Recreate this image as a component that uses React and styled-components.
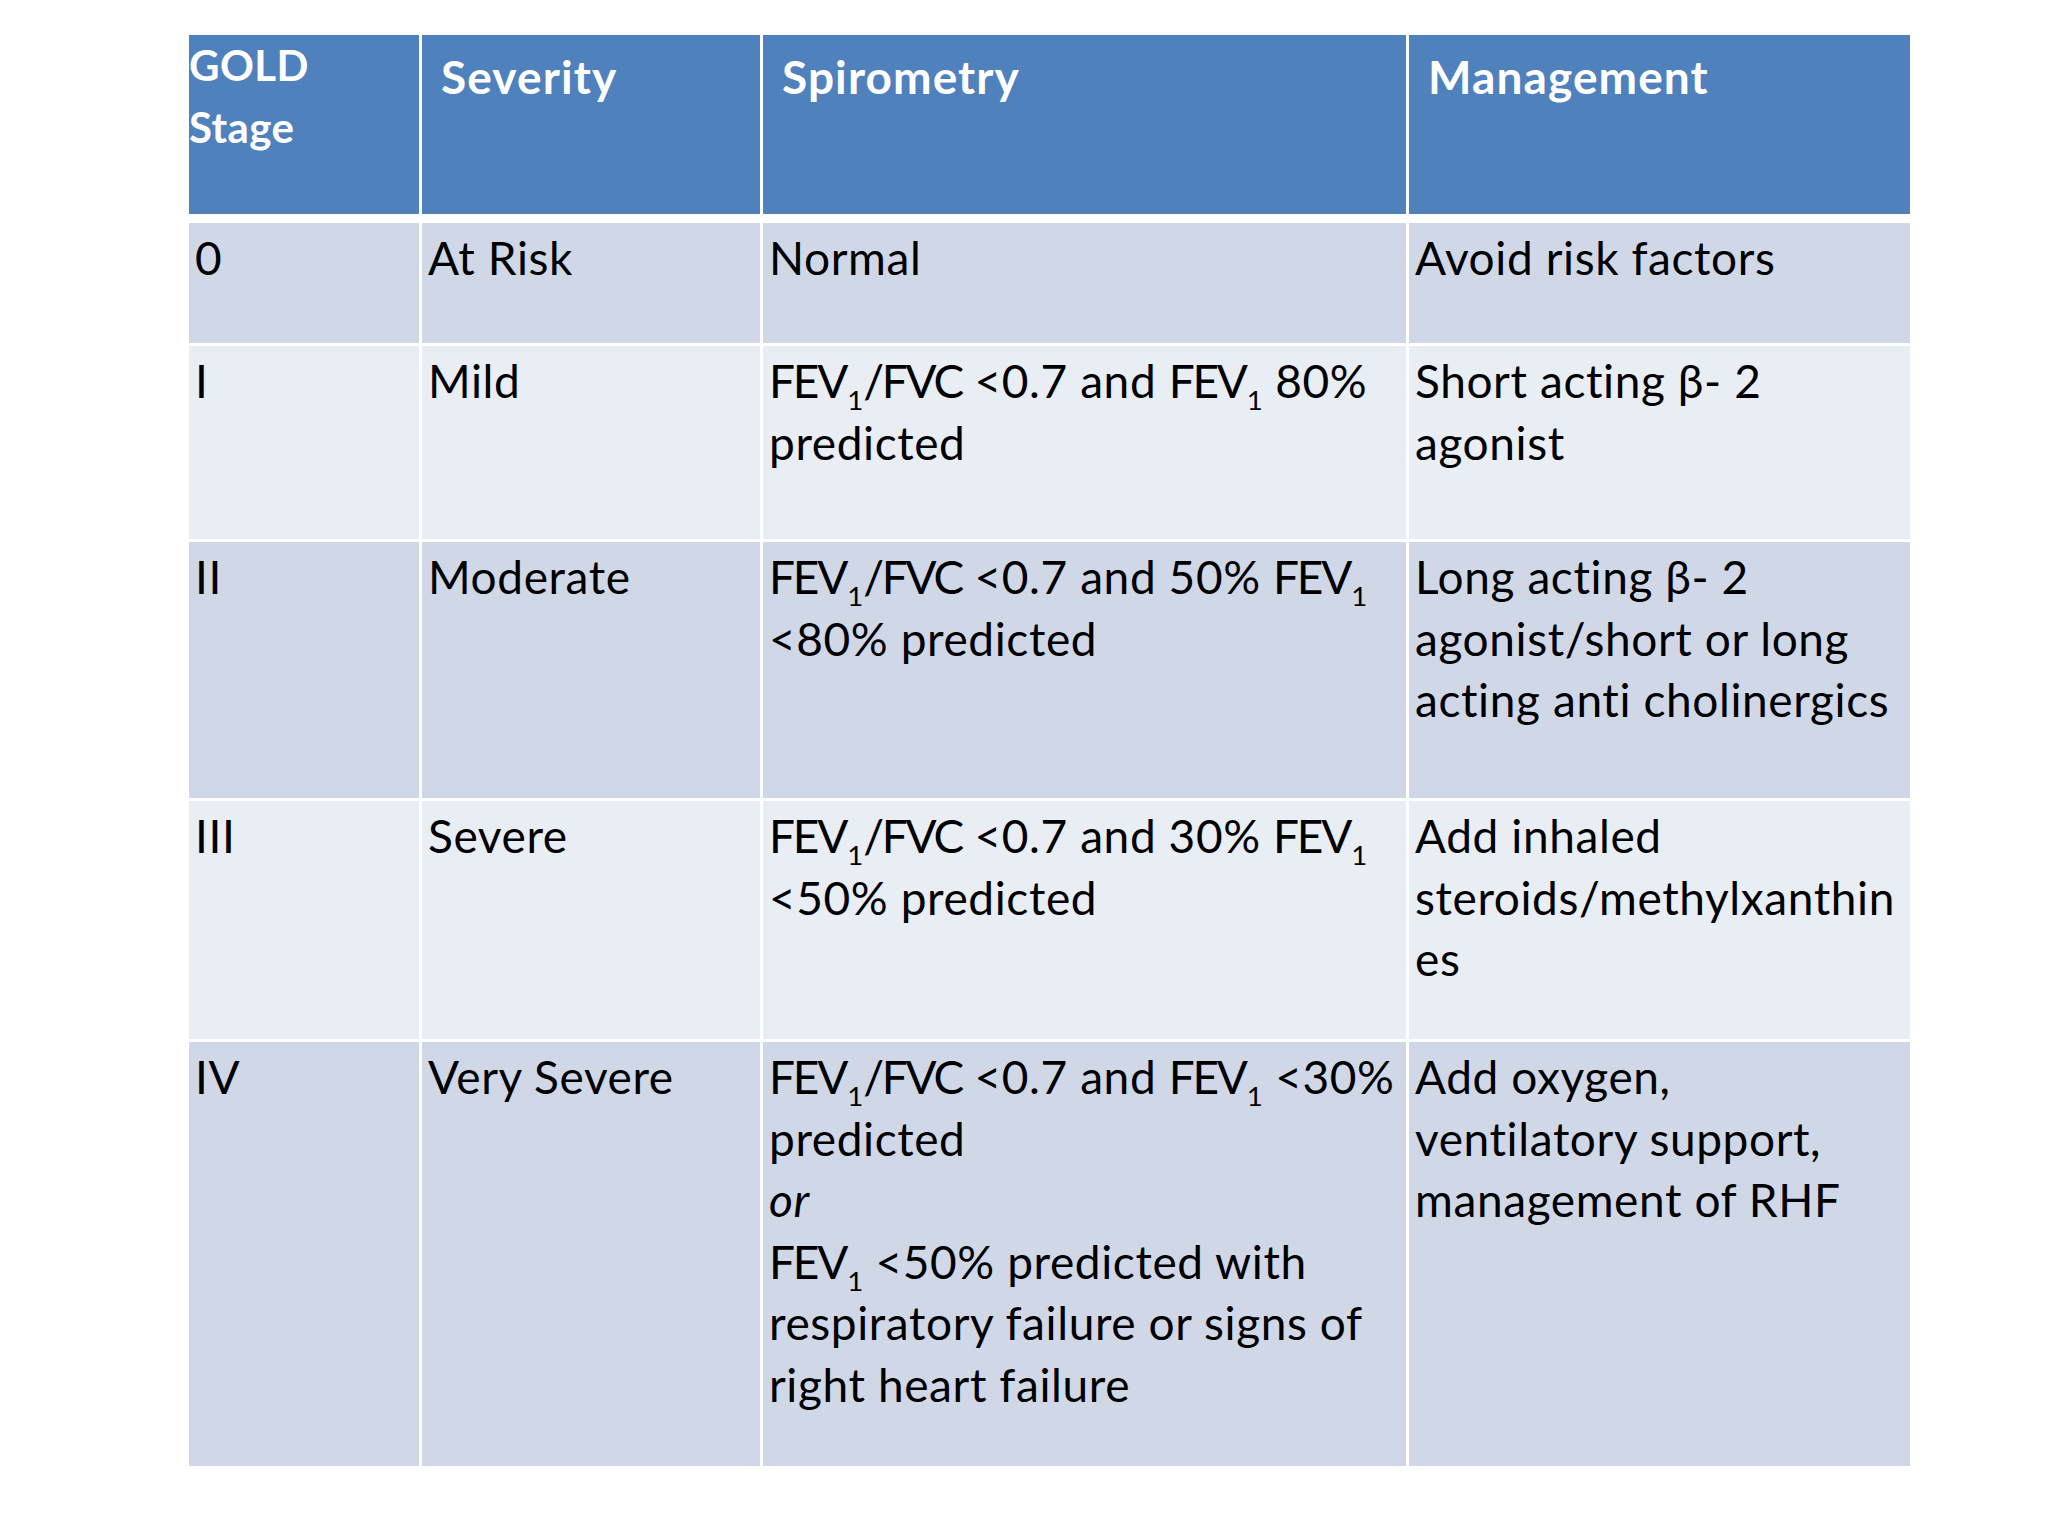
import styled, { createGlobalStyle } from 'styled-components';

const GlobalStyle = createGlobalStyle`
  html, body {
    margin: 0;
    padding: 0;
    background: #ffffff;
  }
  body {
    font-family: Lato, "Noto Sans", sans-serif;
  }
`;

const Slide = styled.div`
  width: 2048px;
  min-height: 1536px;
  box-sizing: border-box;
  padding: 35px 0 0 189px;
`;

const Table = styled.div`
  width: 1721px;
  display: flex;
  flex-direction: column;
  gap: 3px;
`;

const Row = styled.div`
  display: grid;
  grid-template-columns: 230px 338px 643px 501px;
  column-gap: 3px;
  height: ${p => p.$h}px;
  margin-bottom: ${p => (p.$head ? 6 : 0)}px;
`;

const HeadCell = styled.div`
  background: #4f81bd;
  color: #ffffff;
  font-weight: 700;
  font-size: 46px;
  letter-spacing: 1.1px;
  line-height: 61.5px;
  padding: 11px 19px 0;
  white-space: nowrap;
`;

const StageHead = styled(HeadCell)`
  font-size: 42px;
  letter-spacing: 0.4px;
  padding: 0;
`;

const Cell = styled.div`
  background: ${p => (p.$shade ? '#d0d8e8' : '#e9edf4')};
  color: #000000;
  font-size: 46px;
  letter-spacing: 0.6px;
  line-height: 61.5px;
  padding: 4px 6px 0;
  white-space: nowrap;
`;

const Tight = styled.span`
  letter-spacing: -2.2px;
`;

const Sub = styled.sub`
  font-size: 0.6em;
  letter-spacing: 0;
  line-height: 0;
  vertical-align: -12px;
  margin-left: 1px;
`;

const Or = styled.em`
  font-style: italic;
`;

const FEV = () => (
  <Tight>
    FEV<Sub>1</Sub>
  </Tight>
);

const Ratio = () => (
  <Tight>
    FEV<Sub>1</Sub>/FVC
  </Tight>
);

const rows = [
  {
    h: 120,
    stage: '0',
    severity: 'At Risk',
    spiro: <>Normal</>,
    mgmt: <>Avoid risk factors</>,
  },
  {
    h: 193,
    stage: 'I',
    severity: 'Mild',
    spiro: (
      <>
        <Ratio /> &lt;0.7 and <FEV /> 80%
        <br />
        predicted
      </>
    ),
    mgmt: (
      <>
        Short acting β- 2
        <br />
        agonist
      </>
    ),
  },
  {
    h: 256,
    stage: 'II',
    severity: 'Moderate',
    spiro: (
      <>
        <Ratio /> &lt;0.7 and 50% <FEV />
        <br />
        &lt;80% predicted
      </>
    ),
    mgmt: (
      <>
        Long acting β- 2
        <br />
        agonist/short or long
        <br />
        acting anti cholinergics
      </>
    ),
  },
  {
    h: 238,
    stage: 'III',
    severity: 'Severe',
    spiro: (
      <>
        <Ratio /> &lt;0.7 and 30% <FEV />
        <br />
        &lt;50% predicted
      </>
    ),
    mgmt: (
      <>
        Add inhaled
        <br />
        steroids/methylxanthin
        <br />
        es
      </>
    ),
  },
  {
    h: 424,
    stage: 'IV',
    severity: 'Very Severe',
    spiro: (
      <>
        <Ratio /> &lt;0.7 and <FEV /> &lt;30%
        <br />
        predicted
        <br />
        <Or>or</Or>
        <br />
        <FEV /> &lt;50% predicted with
        <br />
        respiratory failure or signs of
        <br />
        right heart failure
      </>
    ),
    mgmt: (
      <>
        Add oxygen,
        <br />
        ventilatory support,
        <br />
        management of RHF
      </>
    ),
  },
];

export default function App() {
  return (
    <>
      <GlobalStyle />
      <Slide>
        <Table>
          <Row $h={179} $head>
            <StageHead>
              GOLD
              <br />
              Stage
            </StageHead>
            <HeadCell>Severity</HeadCell>
            <HeadCell>Spirometry</HeadCell>
            <HeadCell>Management</HeadCell>
          </Row>
          {rows.map((r, i) => (
            <Row key={r.stage} $h={r.h}>
              <Cell $shade={i % 2 === 0}>{r.stage}</Cell>
              <Cell $shade={i % 2 === 0}>{r.severity}</Cell>
              <Cell $shade={i % 2 === 0}>{r.spiro}</Cell>
              <Cell $shade={i % 2 === 0}>{r.mgmt}</Cell>
            </Row>
          ))}
        </Table>
      </Slide>
    </>
  );
}
